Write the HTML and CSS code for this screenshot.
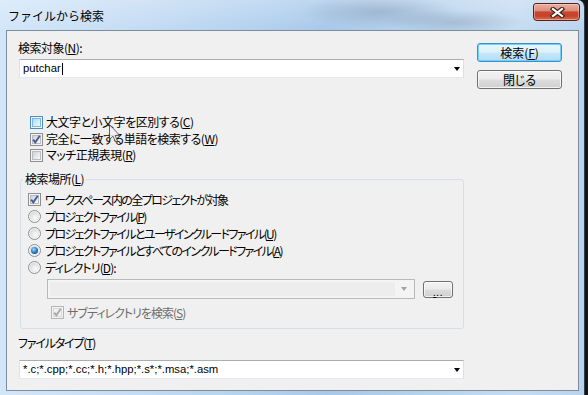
FILE: index.html
```html
<!DOCTYPE html>
<html lang="ja">
<head>
<meta charset="utf-8">
<title>ファイルから検索</title>
<link rel="stylesheet" href="styles.css">
</head>
<body>
<div class="window">
  <div class="titlebar">
    <span class="title">ファイルから検索</span>
    <div class="close">
      <svg width="15" height="11" viewBox="0 0 15 11">
        <path d="M3 2 L12 9 M12 2 L3 9" stroke="#3b2420" stroke-width="4.4" stroke-linecap="square" fill="none"/>
        <path d="M3 2 L12 9 M12 2 L3 9" stroke="#ffffff" stroke-width="2.2" stroke-linecap="square" fill="none"/>
      </svg>
    </div>
  </div>
  <div class="client">
    <div class="main">
      <div class="label">検索対象(<u>N</u>):</div>
      <div class="combo">
        <span class="val">putchar<span class="caret"></span></span>
        <span class="arrow"></span>
      </div>
      <div class="opts">
        <div class="row"><span class="cb hot"></span>大文字と小文字を区別する(<u>C</u>)</div>
        <div class="row r2"><span class="cb"><svg class="chk" width="11" height="11" viewBox="0 0 11 11"><path d="M2.2 5.6 L4.3 8.4 L8.8 1.8" stroke="#4a5c96" stroke-width="1.9" fill="none"/></svg></span>完全に一致する単語を検索する(<u>W</u>)</div>
        <div class="row"><span class="cb"></span>マッチ正規表現(<u>R</u>)</div>
      </div>
      <fieldset class="group">
        <legend>検索場所(<u>L</u>)</legend>
        <div class="grow kana"><span class="cb"><svg class="chk" width="11" height="11" viewBox="0 0 11 11"><path d="M2.2 5.6 L4.3 8.4 L8.8 1.8" stroke="#4a5c96" stroke-width="1.9" fill="none"/></svg></span>ワークスペース内の全プロジェクトが対象</div>
        <div class="grow kana"><span class="rb"></span>プロジェクトファイル(<u>P</u>)</div>
        <div class="grow kana"><span class="rb"></span>プロジェクトファイルとユーザインクルードファイル(<u>U</u>)</div>
        <div class="grow kana"><span class="rb on"></span>プロジェクトファイルとすべてのインクルードファイル(<u>A</u>)</div>
        <div class="grow dir"><span class="rb"></span>ディレクトリ(<u>D</u>):</div>
        <div class="dirrow">
          <div class="dcombo"><span class="dfield"></span><span class="darrow"></span></div>
          <div class="browse"><span><u>.</u>..</span></div>
        </div>
        <div class="subrow"><span class="cb dis"><svg class="chk" width="11" height="11" viewBox="0 0 11 11"><path d="M2.2 5.6 L4.3 8.4 L8.8 1.8" stroke="#a9a9a9" stroke-width="1.9" fill="none"/></svg></span>サブディレクトリを検索(<u>S</u>)</div>
      </fieldset>
      <div class="label typelabel">ファイルタイプ(<u>T</u>)</div>
      <div class="combo typecombo">
        <span class="val">*.c;*.cpp;*.cc;*.h;*.hpp;*.s*;*.msa;*.asm</span>
        <span class="arrow"></span>
      </div>
    </div>
    <div class="side">
      <div class="btn default">検索(<u>F</u>)</div>
      <div class="btn">閉じる</div>
    </div>
  </div>
</div>
<svg class="cursor" width="12" height="19" viewBox="0 0 12 19">
  <path d="M0.5 0.5 L0.5 15.5 L4 12.2 L6.6 18 L8.6 17.1 L6.1 11.5 L10.8 11.5 Z" fill="#f2f2f2" stroke="#4a4a4a" stroke-width="1" stroke-linejoin="round"/>
</svg>
</body>
</html>
```
FILE: styles.css
```css
* {
  box-sizing: border-box;
}

html,
body {
  margin: 0;
  padding: 0;
}

body {
  width: 588px;
  height: 395px;
  overflow: hidden;
  position: relative;
  background: #141414;
  font-family: "Noto Sans CJK JP", "Liberation Sans", sans-serif;
  font-size: 12px;
  font-feature-settings: "palt" 1;
  color: #000;
}

u {
  text-decoration: underline;
  text-underline-offset: 1px;
}

/* ---------- window frame ---------- */
.window {
  width: 585px;
  height: 395px;
  padding: 0 5px 0 6px;
  border-right: 1px solid #34414f;
  border-radius: 0 7px 0 0;
  background:
    radial-gradient(ellipse 80px 16px at 380px 12px, rgba(110, 130, 155, 0.35), rgba(110, 130, 155, 0)),
    radial-gradient(ellipse 70px 12px at 455px 22px, rgba(110, 130, 150, 0.3), rgba(110, 130, 150, 0)),
    linear-gradient(180deg, rgba(255, 255, 255, 0.25), rgba(255, 255, 255, 0) 30px),
    linear-gradient(90deg, #d3e6f9 0%, #c3dbf3 25%, #b2d0ee 45%, #a8c8e9 56%, #b6d2ed 74%, #c5dcf2 88%, #bad3ed 100%);
}

.titlebar {
  height: 30px;
  display: flex;
  justify-content: space-between;
  align-items: flex-start;
}

.title {
  margin: 7px 0 0 2px;
  line-height: 18px;
  font-size: 12px;
  font-feature-settings: normal;
  color: #000;
}

.close {
  width: 47px;
  height: 18px;
  margin: 3px -1px 0 0;
  border: 1px solid #5a2118;
  border-radius: 3px 3px 4px 4px;
  background: linear-gradient(180deg, #eab1a3 0%, #dc8e7c 42%, #c8452c 50%, #c6442b 75%, #d9704e 100%);
  box-shadow: inset 0 0 0 1px rgba(255, 220, 210, 0.45);
  display: flex;
  align-items: center;
  justify-content: center;
}

.close svg {
  display: block;
  margin-left: 2px;
}

/* ---------- client area ---------- */
.client {
  height: 361px;
  border: 1px solid #7e8d9d;
  background: #f0f0f0;
  display: flex;
  padding: 9px 0 0 11px;
}

.main {
  width: 446px;
  flex: none;
  letter-spacing: -0.5px;
}

.side {
  width: 85px;
  flex: none;
  margin-left: 13px;
  padding-top: 3px;
}

.label {
  height: 15px;
  line-height: 15px;
  white-space: nowrap;
}

.combo {
  margin: 4px 0 0 1px;
  width: 445px;
  height: 19px;
  border-style: solid;
  border-width: 1px;
  border-color: #abadb3 #dbdfe6 #e3e9ef #e2e3ea;
  background: #fff;
  display: flex;
  align-items: center;
  letter-spacing: 0;
}

.combo .val {
  flex: 1;
  padding-left: 3px;
  line-height: 15px;
  white-space: nowrap;
  display: flex;
  align-items: center;
  font-family: "Liberation Sans", "Noto Sans CJK JP", sans-serif;
  font-size: 11.3px;
}

.caret {
  display: inline-block;
  width: 1px;
  height: 12px;
  margin-left: 1px;
  background: #000;
}

.combo .arrow {
  width: 13px;
  height: 100%;
  display: flex;
  align-items: center;
  justify-content: center;
}

.combo .arrow::before {
  content: "";
  width: 0;
  height: 0;
  border-left: 3.5px solid transparent;
  border-right: 3.5px solid transparent;
  border-top: 4px solid #000;
}

.typelabel {
  margin-top: 6px;
  letter-spacing: -1.2px;
}

.typecombo {
  margin-top: 10px;
}

/* ---------- checkboxes ---------- */
.opts {
  margin-top: 36px;
  padding-left: 12px;
}

.row {
  height: 16px;
  line-height: 16px;
  display: flex;
  align-items: center;
  white-space: nowrap;
}

.row.r2 {
  margin-top: 1px;
}

.row .cb {
  margin-right: 3px;
}

.cb {
  position: relative;
  flex: none;
  width: 13px;
  height: 13px;
  border: 1px solid #8e8f8f;
  background: #f4f4f4;
}

.cb::before {
  content: "";
  position: absolute;
  left: 1px;
  top: 1px;
  right: 1px;
  bottom: 1px;
  border: 1px solid #b9bdc2;
  background: linear-gradient(135deg, #cdd1d6 0%, #e6e8eb 55%, #f8f8f9 100%);
}

.cb.hot {
  border-color: #4d8cc5;
}

.cb.hot::before {
  border-color: #7ab8e4;
  background: linear-gradient(135deg, #b3dcf5 0%, #d4ecfa 55%, #eef8fe 100%);
}

.cb.dis {
  border-color: #b5b5b5;
}

.cb.dis::before {
  border-color: #d8d8d8;
  background: #f2f2f2;
}

.cb .chk {
  position: absolute;
  left: 0;
  top: 0;
  display: block;
}

/* ---------- radios ---------- */
.rb {
  position: relative;
  flex: none;
  width: 13px;
  height: 13px;
  border: 1px solid #8e8f8f;
  border-radius: 50%;
  background: #f4f4f4;
}

.rb::before {
  content: "";
  position: absolute;
  left: 1px;
  top: 1px;
  right: 1px;
  bottom: 1px;
  border-radius: 50%;
  background: radial-gradient(circle at 60% 65%, #fbfbfb 0%, #e2e3e5 55%, #c9ccd0 100%);
}

.rb.on::after {
  content: "";
  position: absolute;
  left: 2px;
  top: 2px;
  width: 7px;
  height: 7px;
  border-radius: 50%;
  background: radial-gradient(circle at 40% 35%, #a8dcfa 0%, #3a8fd3 40%, #0f569c 75%, #0b3e75 100%);
}

/* ---------- group box ---------- */
.group {
  margin: 9px 0 0 2px;
  width: 444px;
  min-width: 0;
  border: 1px solid #d5dfe5;
  border-radius: 3px;
  padding: 5px 0 7px 7px;
}

.group legend {
  margin-left: -5px;
  padding: 0 2px;
  line-height: 14px;
  height: 14px;
}

.grow {
  height: 17px;
  line-height: 17px;
  display: flex;
  align-items: center;
  white-space: nowrap;
}

.grow.kana {
  letter-spacing: -1.6px;
}

.grow.dir {
  letter-spacing: -0.9px;
}

.grow .cb,
.grow .rb {
  margin-right: 4px;
}

.dirrow {
  margin-top: 3px;
  padding-left: 19px;
  display: flex;
  align-items: center;
}

.dcombo {
  width: 368px;
  height: 20px;
  border: 1px solid #b7b9bb;
  background: #f4f4f4;
  display: flex;
  padding: 2px;
}

.dfield {
  flex: 1;
  background: #ededed;
}

.darrow {
  width: 17px;
  display: flex;
  align-items: center;
  justify-content: center;
}

.darrow::before {
  content: "";
  width: 0;
  height: 0;
  border-left: 3.5px solid transparent;
  border-right: 3.5px solid transparent;
  border-top: 4px solid #a3a3a3;
}

.browse {
  margin-left: 8px;
  width: 30px;
  height: 17px;
  border: 1px solid #707070;
  border-radius: 3px;
  background: linear-gradient(180deg, #f2f2f2 0%, #ebebeb 48%, #dddddd 52%, #cfcfcf 100%);
  box-shadow: inset 0 0 0 1px rgba(255, 255, 255, 0.7);
  display: flex;
  justify-content: center;
  align-items: flex-end;
  font-size: 10px;
  line-height: 11px;
  letter-spacing: 0.5px;
}

.subrow {
  margin-top: 5px;
  padding-left: 23px;
  height: 17px;
  line-height: 17px;
  display: flex;
  align-items: center;
  white-space: nowrap;
  color: #6d6d6d;
  letter-spacing: -1px;
}

.subrow .cb {
  margin-right: 3px;
}

/* ---------- push buttons ---------- */
.btn {
  height: 19px;
  line-height: 17px;
  margin-bottom: 8px;
  text-align: center;
  border: 1px solid #707070;
  border-radius: 3px;
  background: linear-gradient(180deg, #f2f2f2 0%, #ebebeb 48%, #dddddd 52%, #cfcfcf 100%);
  box-shadow: inset 0 0 0 1px rgba(255, 255, 255, 0.75);
  white-space: nowrap;
}

.btn.default {
  border-color: #3c8fd0;
  background: linear-gradient(180deg, #e9f6fd 0%, #dcf1fc 48%, #c6e8fa 52%, #b2dcf5 100%);
  box-shadow: inset 0 0 0 1px #6fd0f8;
}

/* ---------- mouse pointer ---------- */
.cursor {
  position: absolute;
  left: 109px;
  top: 124px;
  opacity: 0.85;
}
```
